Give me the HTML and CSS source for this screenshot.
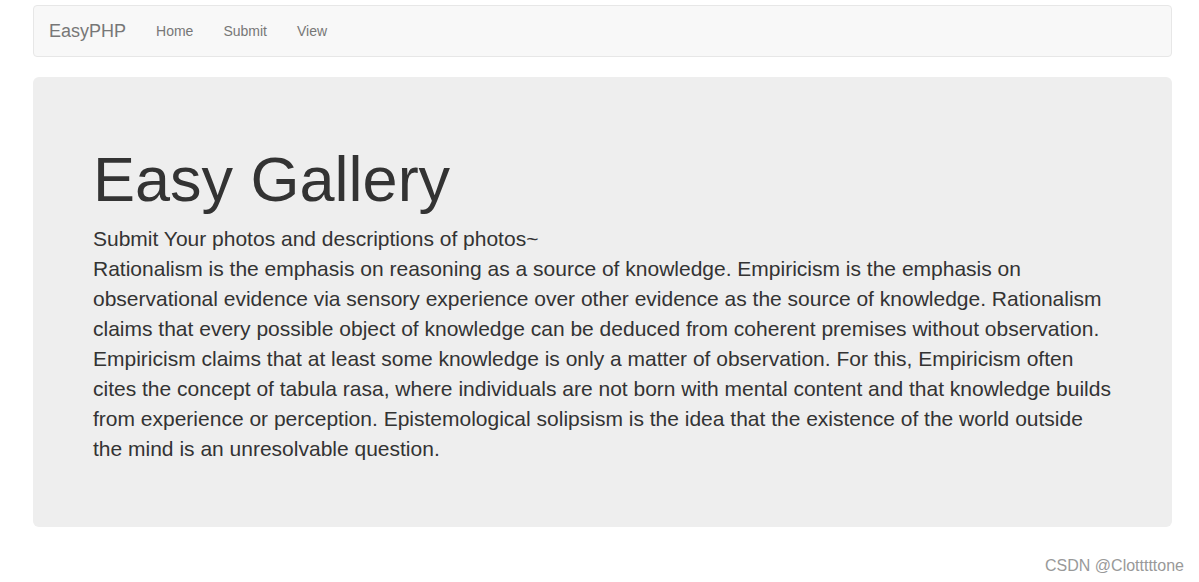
FILE: index.html
```html
<!DOCTYPE html>
<html>
<head>
<meta charset="utf-8">
<title>EasyPHP</title>
<link rel="stylesheet" href="styles.css">
</head>
<body>
<div class="container">
  <nav class="navbar">
    <a class="brand" href="#">EasyPHP</a>
    <ul class="nav">
      <li><a href="#">Home</a></li>
      <li><a href="#">Submit</a></li>
      <li><a href="#">View</a></li>
    </ul>
  </nav>
  <div class="jumbotron">
    <h1>Easy Gallery</h1>
    <p>Submit Your photos and descriptions of photos~<br>Rationalism is the emphasis on reasoning as a source of knowledge. Empiricism is the emphasis on observational evidence via sensory experience over other evidence as the source of knowledge. Rationalism claims that every possible object of knowledge can be deduced from coherent premises without observation. Empiricism claims that at least some knowledge is only a matter of observation. For this, Empiricism often cites the concept of tabula rasa, where individuals are not born with mental content and that knowledge builds from experience or perception. Epistemological solipsism is the idea that the existence of the world outside the mind is an unresolvable question.</p>
  </div>
</div>
<div class="watermark">CSDN @Clotttttone</div>
</body>
</html>
```

FILE: styles.css
```css
* { box-sizing: border-box; }
html, body { margin: 0; padding: 0; }
body {
  font-family: "Liberation Sans", Arial, Helvetica, sans-serif;
  font-size: 14px;
  line-height: 1.42857;
  color: #333;
  background: #fff;
  height: 582px;
  overflow: hidden;
  position: relative;
}
.container {
  width: 1139px;
  margin-left: 33px;
  padding-top: 5px;
}
.navbar {
  display: flex;
  align-items: center;
  height: 52px;
  background: #f8f8f8;
  border: 1px solid #e7e7e7;
  border-radius: 4px;
  margin-bottom: 20px;
}
.brand {
  font-size: 18px;
  line-height: 20px;
  padding: 15px;
  color: #777;
  text-decoration: none;
}
.nav {
  display: flex;
  list-style: none;
  margin: 0;
  padding: 0;
}
.nav a {
  display: block;
  padding: 15px;
  line-height: 20px;
  color: #777;
  text-decoration: none;
}
.jumbotron {
  background: #eee;
  border-radius: 6px;
  padding: 48px 60px;
}
.jumbotron h1 {
  font-size: 63px;
  font-weight: 500;
  line-height: 1.1;
  margin: 20px 0 10px;
  color: #333;
}
.jumbotron p {
  font-size: 21px;
  font-weight: 400;
  line-height: 30px;
  margin: 0 0 15px;
}
.watermark {
  position: absolute;
  right: 15px;
  top: 555px;
  font-size: 16px;
  color: #999;
  line-height: 22px;
}
```
